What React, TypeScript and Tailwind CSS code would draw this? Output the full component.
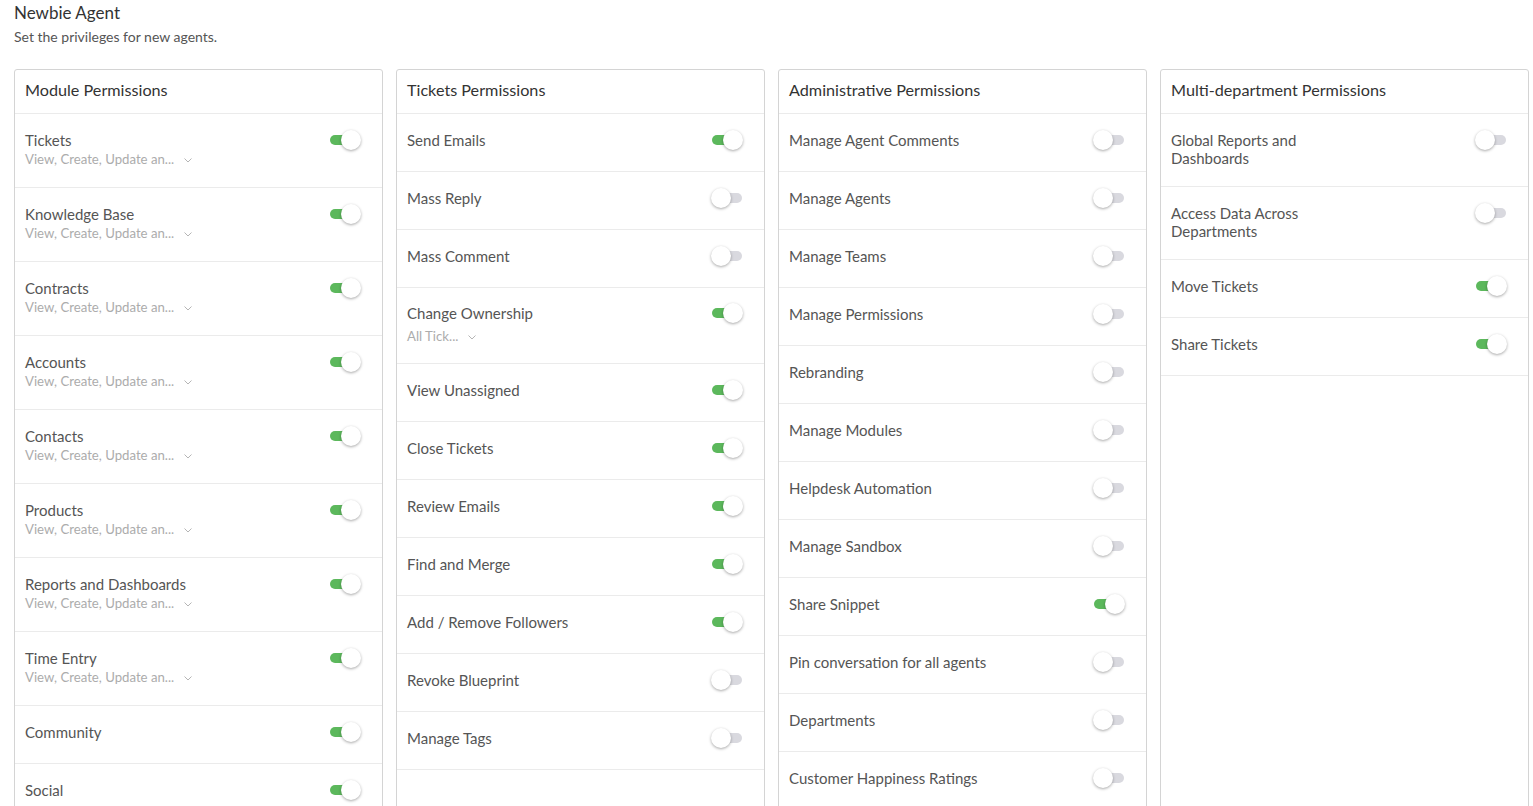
import React from "react";

type Row = { label: string; on: boolean; sub?: string; wrap?: boolean };

const modules: Row[] = [
  { label: "Tickets", on: true, sub: "View, Create, Update an..." },
  { label: "Knowledge Base", on: true, sub: "View, Create, Update an..." },
  { label: "Contracts", on: true, sub: "View, Create, Update an..." },
  { label: "Accounts", on: true, sub: "View, Create, Update an..." },
  { label: "Contacts", on: true, sub: "View, Create, Update an..." },
  { label: "Products", on: true, sub: "View, Create, Update an..." },
  { label: "Reports and Dashboards", on: true, sub: "View, Create, Update an..." },
  { label: "Time Entry", on: true, sub: "View, Create, Update an..." },
  { label: "Community", on: true },
  { label: "Social", on: true },
  { label: "Chat", on: true },
];

const tickets: Row[] = [
  { label: "Send Emails", on: true },
  { label: "Mass Reply", on: false },
  { label: "Mass Comment", on: false },
  { label: "Change Ownership", on: true, sub: "All Tick..." },
  { label: "View Unassigned", on: true },
  { label: "Close Tickets", on: true },
  { label: "Review Emails", on: true },
  { label: "Find and Merge", on: true },
  { label: "Add / Remove Followers", on: true },
  { label: "Revoke Blueprint", on: false },
  { label: "Manage Tags", on: false },
];

const admin: Row[] = [
  { label: "Manage Agent Comments", on: false },
  { label: "Manage Agents", on: false },
  { label: "Manage Teams", on: false },
  { label: "Manage Permissions", on: false },
  { label: "Rebranding", on: false },
  { label: "Manage Modules", on: false },
  { label: "Helpdesk Automation", on: false },
  { label: "Manage Sandbox", on: false },
  { label: "Share Snippet", on: true },
  { label: "Pin conversation for all agents", on: false },
  { label: "Departments", on: false },
  { label: "Customer Happiness Ratings", on: false },
];

const multi: Row[] = [
  { label: "Global Reports and Dashboards", on: false, wrap: true },
  { label: "Access Data Across Departments", on: false, wrap: true },
  { label: "Move Tickets", on: true },
  { label: "Share Tickets", on: true },
];

function Toggle({ on }: { on: boolean }) {
  return (
    <div className="relative h-[20px] w-[32px] shrink-0">
      <div
        className={
          "absolute left-[1px] right-[1px] top-[5px] h-[10px] rounded-full " +
          (on ? "bg-[#5cb85c]" : "bg-[#d9d9df]")
        }
      />
      <div
        className={
          "absolute top-0 h-[20px] w-[20px] rounded-full bg-white shadow-[0_1px_3px_rgba(0,0,0,0.35)] " +
          (on ? "right-0" : "left-0")
        }
      />
    </div>
  );
}

function Chevron() {
  return (
    <svg width="8" height="5" viewBox="0 0 8 5" className="ml-[10px] mt-[2px]">
      <polyline points="0.5,0.5 4,4 7.5,0.5" fill="none" stroke="#b5b5b5" strokeWidth="1" />
    </svg>
  );
}

function PermRow({ row, kind }: { row: Row; kind: "module" | "ticket" | "simple" }) {
  let pad = "pt-[17px] pb-[22px]";
  if (row.sub && kind === "module") pad = "pt-[17px] pb-[19px]";
  if (row.sub && kind === "ticket") pad = "pt-[16px] pb-[18px]";
  if (row.wrap) pad = "pt-[17px] pb-[19px]";
  return (
    <div className={"flex items-start justify-between border-b border-[#ebebeb] pl-[10px] pr-[21px] " + pad}>
      <div className="flex flex-col">
        <div className={"text-[15px] leading-[18px] text-[#555] " + (row.wrap ? "w-[160px]" : "")}>
          {row.label}
        </div>
        {row.sub && (
          <div
            className={
              "flex items-center text-[13.2px] leading-[18px] text-[#acacac] " +
              (kind === "module" ? "mt-[1px]" : "mt-[5px]")
            }
          >
            <span>{row.sub}</span>
            <Chevron />
          </div>
        )}
      </div>
      <div className="flex h-[18px] items-center">
        <Toggle on={row.on} />
      </div>
    </div>
  );
}

function Panel({ title, rows, kind }: { title: string; rows: Row[]; kind: "module" | "ticket" | "simple" }) {
  return (
    <div className="flex flex-col rounded-[3px] border border-[#d4d4d4] bg-white">
      <div className="flex h-[44px] items-center border-b border-[#ebebeb] pb-[3px] pl-[10px] text-[16.2px] text-[#333]">
        {title}
      </div>
      {rows.map((r) => (
        <PermRow key={r.label} row={r} kind={kind} />
      ))}
    </div>
  );
}

export default function App() {
  return (
    <div
      className="h-[806px] overflow-hidden bg-white"
      style={{ fontFamily: "Lato, 'Open Sans', sans-serif" }}
    >
      <div className="pl-[14px] pt-[3px]">
        <div className="text-[17px] leading-[20px] text-[#333]">Newbie Agent</div>
        <div className="mt-[5px] text-[14px] leading-[18px] text-[#555]">Set the privileges for new agents.</div>
      </div>
      <div className="mt-[23px] grid h-[900px] grid-cols-4 gap-[13px] pl-[14px] pr-[4px]">
        <Panel title="Module Permissions" rows={modules} kind="module" />
        <Panel title="Tickets Permissions" rows={tickets} kind="ticket" />
        <Panel title="Administrative Permissions" rows={admin} kind="simple" />
        <Panel title="Multi-department Permissions" rows={multi} kind="simple" />
      </div>
    </div>
  );
}
